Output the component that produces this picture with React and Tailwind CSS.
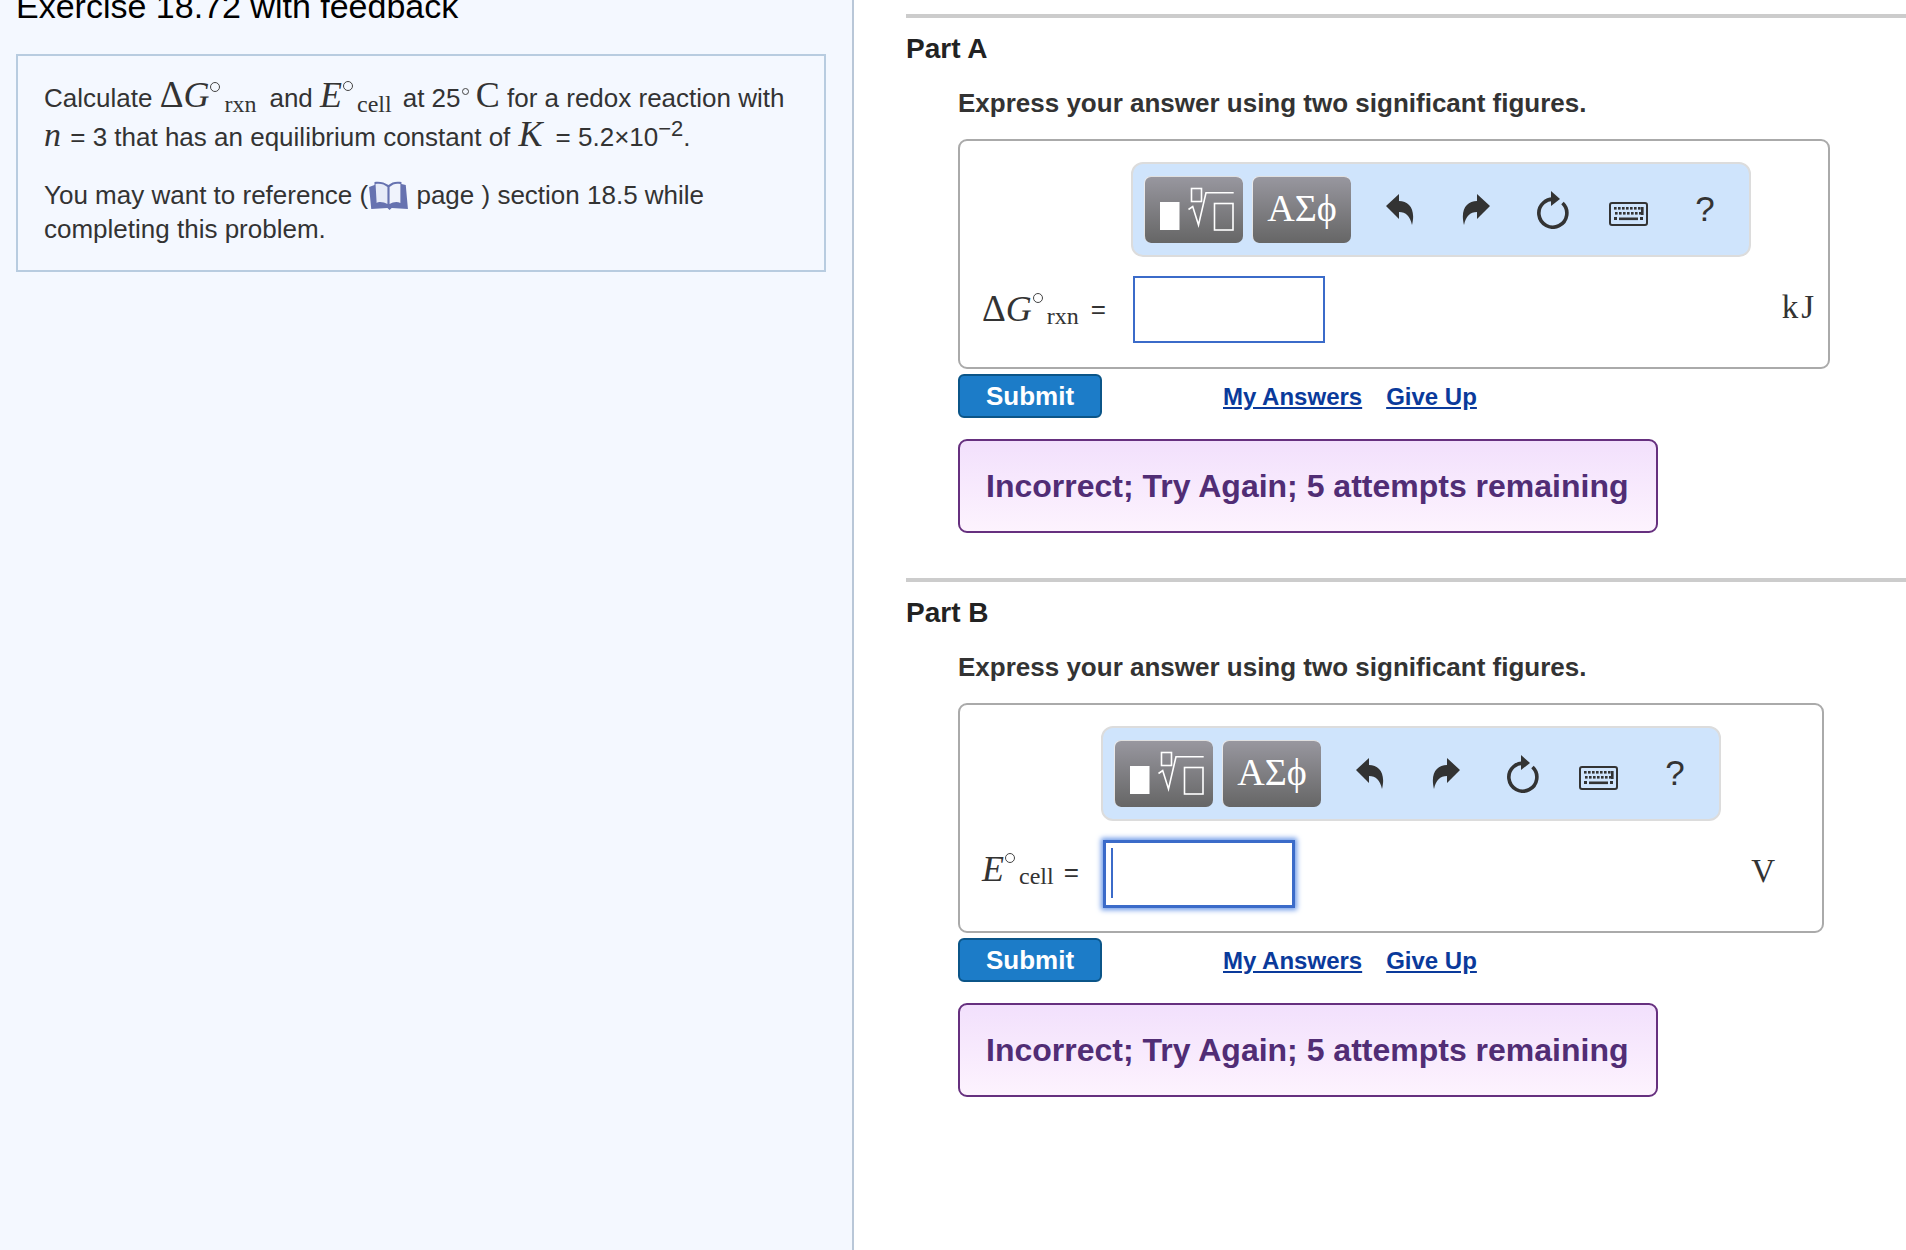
import React from 'react';

const serif = "font-['Liberation_Serif',serif]";

function Undo({ flip }) {
  return (
    <svg width="30" height="34" viewBox="0 0 30 34" className={flip ? '-scale-x-100' : ''}>
      <path d="M1 13 L14 1 V8 C24 8 31 16 27 32 C25 23 21 19 14 19 V26 Z" fill="#333" />
    </svg>
  );
}

function Reset() {
  return (
    <svg width="34" height="38" viewBox="0 0 34 38">
      <path d="M21 8.5 A14 14 0 1 0 27.5 12" fill="none" stroke="#333" strokeWidth="3.6" />
      <path d="M16 0 L25 8 L16 15 Z" fill="#333" />
    </svg>
  );
}

function Keyboard() {
  const top = [5, 9, 13, 17, 21, 25, 29];
  return (
    <svg width="39" height="24" viewBox="0 0 39 24">
      <rect x="1" y="1" width="37" height="22" rx="2" fill="none" stroke="#333" strokeWidth="2" />
      {top.map((x) => <rect key={x} x={x} y="5" width="2.6" height="2.6" fill="#333" />)}
      {top.map((x) => <rect key={x} x={x + 1} y="10" width="2.6" height="2.6" fill="#333" />)}
      <rect x="5" y="15" width="3" height="3" fill="#333" />
      <rect x="10" y="15.5" width="19" height="2.6" fill="#333" />
      <rect x="31" y="15" width="3" height="3" fill="#333" />
      <rect x="32" y="5" width="2.6" height="8" fill="#333" />
    </svg>
  );
}

function TemplatesIcon() {
  return (
    <svg width="99" height="67" viewBox="0 0 99 67">
      <rect x="15" y="25" width="19.5" height="28" fill="#fff" />
      <rect x="46.5" y="11.5" width="10" height="13" fill="none" stroke="#fff" strokeWidth="1.6" />
      <path d="M43.5 32.5 L47.7 29.5 L53.5 48 L61 15.7 H88.7" fill="none" stroke="#fff" strokeWidth="1.6" />
      <rect x="69.5" y="26.5" width="18.5" height="26.5" fill="none" stroke="#fff" strokeWidth="1.6" />
    </svg>
  );
}

function Book() {
  return (
    <svg width="41" height="30" viewBox="0 0 38 30" preserveAspectRatio="none" className="inline-block align-[-7px] blur-[0.7px]">
      <path d="M1 6 L3 28 L18 27 L20 29 L22 27 L37 28 L35 4 L31 3 L31 1 C26 0 22 1 19 4 C15 1 10 0 6 1 L6 4 Z" fill="#6672b0" />
      <path d="M7 3 C11 2 15 3 18 6 L18 23 C15 21 10 20 8 22 Z" fill="#e6ebf8" />
      <path d="M30 3 C26 2 23 3 20 6 L20 23 C23 21 27 20 30 22 Z" fill="#f0f3fc" />
    </svg>
  );
}

function Toolbar({ left }) {
  return (
    <div className={`${left} w-[620px] h-[95px] shrink-0 bg-[#cfe4fc] border-2 border-[#dcdcdc] rounded-[12px] flex items-center pl-[11px]`}>
      <div className="w-[99px] h-[67px] rounded-[7px] bg-linear-to-b from-[#98979f] to-[#666666] border-t border-l border-white/80">
        <TemplatesIcon />
      </div>
      <div className={`ml-[9px] w-[99px] h-[67px] rounded-[7px] bg-linear-to-b from-[#98979f] to-[#666666] border-t border-l border-white/80 flex items-center justify-center text-white text-[38px] pb-[3px] ${serif}`}>
        ΑΣϕ
      </div>
      <div className="ml-[10px] w-[77px] flex justify-center"><Undo /></div>
      <div className="w-[76px] flex justify-center"><Undo flip /></div>
      <div className="w-[76px] flex justify-center"><Reset /></div>
      <div className="w-[76px] flex justify-center pt-[8px]"><Keyboard /></div>
      <div className="w-[78px] text-center text-[35px] text-[#333] leading-none pb-[2px]">?</div>
    </div>
  );
}

function Part({ name, boxWidth, toolbarLeft, label, labelWidth, unit, unitRight, focused }) {
  return (
    <section className="border-t-[4px] border-[#cccccc] h-[564px]">
      <h2 className="mt-[15px] text-[28px] leading-[32px] font-bold text-[#222]">{name}</h2>
      <div className="pl-[52px]">
        <p className="mt-[22px] text-[26px] leading-[32px] font-bold text-[#333]">Express your answer using two significant figures.</p>
        <div className={`mt-[20px] ${boxWidth} h-[230px] border-2 border-[#aaaaaa] rounded-[9px] bg-white pt-[21px]`}>
          <Toolbar left={toolbarLeft} />
          <div className="mt-[19px] flex items-center">
            <div className={`pl-[22px] ${labelWidth} shrink-0 text-[#333] whitespace-nowrap`}>{label}</div>
            {focused ? (
              <div className="w-[192px] h-[68px] border-[3px] border-[#3b6bc9] shadow-[0_0_5px_2px_#6f9be8] bg-white pl-[5px] pt-[5px]">
                <div className="w-[2px] h-[50px] bg-[#3b6bc9]" />
              </div>
            ) : (
              <div className="w-[192px] h-[67px] border-2 border-[#3b6bc9] bg-white" />
            )}
            <div className={`ml-auto ${unitRight} text-[33px] leading-[40px] text-[#333] pb-[6px] ${serif}`}>{unit}</div>
          </div>
        </div>
        <div className="mt-[5px] flex items-center">
          <button className="w-[144px] h-[44px] bg-[#1c7cc8] border-2 border-[#0b5588] rounded-[6px] text-white text-[26px] font-bold">Submit</button>
          <a className="ml-[121px] mt-[2px] text-[24px] font-bold text-[#0a3a9b] underline">My Answers</a>
          <a className="ml-[24px] mt-[2px] text-[24px] font-bold text-[#0a3a9b] underline">Give Up</a>
        </div>
        <div className="mt-[21px] w-[700px] h-[94px] border-2 border-[#66307f] rounded-[9px] bg-linear-to-b from-[#f2e0fc] to-[#fdf3fe] flex items-center pl-[26px] text-[32px] font-bold text-[#512d75] whitespace-nowrap">
          Incorrect; Try Again; 5 attempts remaining
        </div>
      </div>
    </section>
  );
}

function Ring({ className }) {
  return <span className={`inline-block rounded-full border-[1.5px] border-[#444] ml-[1px] ${className}`} />;
}

// ring and subscript sit a little differently in the paragraph and in the answer row
function DeltaG({ ring, sub }) {
  return (
    <span className={`${serif} leading-none`}>
      <span className="text-[37px] leading-none">Δ</span><i className="text-[36px] leading-none">G</i>
      <Ring className={`w-[10px] h-[10px] ${ring}`} />
      <span className={`text-[24px] leading-none ml-[4px] ${sub}`}>rxn</span>
    </span>
  );
}

function ECell({ ring, sub }) {
  return (
    <span className={`${serif} leading-none`}>
      <i className="text-[36px] leading-none">E</i>
      <Ring className={`w-[10px] h-[10px] ${ring}`} />
      <span className={`text-[24px] leading-none ml-[4px] ${sub}`}>cell</span>
    </span>
  );
}

export default function App() {
  return (
    <div className="flex h-[1250px] w-[1906px] overflow-hidden bg-white font-['Liberation_Sans',Arial,sans-serif]">
      {/* left panel */}
      <div className="w-[854px] shrink-0 h-full bg-[#f4f8ff] border-r-2 border-[#b9c7d8] pl-[16px]">
        <h1 className="-mt-[13px] text-[34px] leading-[38px] text-black whitespace-nowrap">Exercise 18.72 with feedback</h1>
        <div className="mt-[29px] w-[810px] h-[218px] border-2 border-[#b8cce0] pl-[26px] pt-[20px] text-[26px] text-[#333]">
          <p className="leading-[35px] whitespace-nowrap">
            Calculate <DeltaG ring="align-[15px]" sub="align-[-5px]" /><span className="ml-[13px]">and</span> <ECell ring="align-[16px]" sub="align-[-5px]" /><span className="ml-[11px]">at 25</span><Ring className="w-[7px] h-[7px] align-[12px]" /> <span className={`${serif} text-[36px] leading-none`}>C</span> for a redox reaction with
          </p>
          <p className="leading-[38px] whitespace-nowrap">
            <i className={`${serif} text-[34px] leading-none`}>n</i><span className="ml-[2px]"> = 3 that has an equilibrium constant of </span><i className={`${serif} text-[36px] leading-none ml-[1px]`}>K</i><span className="ml-[13px]">= 5.2×10</span><span className="text-[22px] leading-none align-[10px]">−2</span>.
          </p>
          <p className="mt-[22px] leading-[34px]">
            You may want to reference (<Book /> page ) section 18.5 while<br />completing this problem.
          </p>
        </div>
      </div>

      {/* right panel */}
      <div className="flex-1 pl-[52px] pt-[14px]">
        <Part
          name="Part A"
          boxWidth="w-[872px]"
          toolbarLeft="ml-[171px]"
          label={<><DeltaG ring="align-[18px]" sub="align-[-3px]" /><span className="ml-[12px] text-[26px] align-[3px]">=</span></>}
          labelWidth="w-[173px]"
          unit="kJ"
          unitRight="mr-[11px] tracking-[3px]"
        />
        <Part
          name="Part B"
          boxWidth="w-[866px]"
          toolbarLeft="ml-[141px]"
          label={<><ECell ring="align-[18px]" sub="align-[-3px]" /><span className="ml-[10px] text-[26px]">=</span></>}
          labelWidth="w-[143px] pb-[6px]"
          unit="V"
          unitRight="mr-[47px]"
          focused
        />
      </div>
    </div>
  );
}
